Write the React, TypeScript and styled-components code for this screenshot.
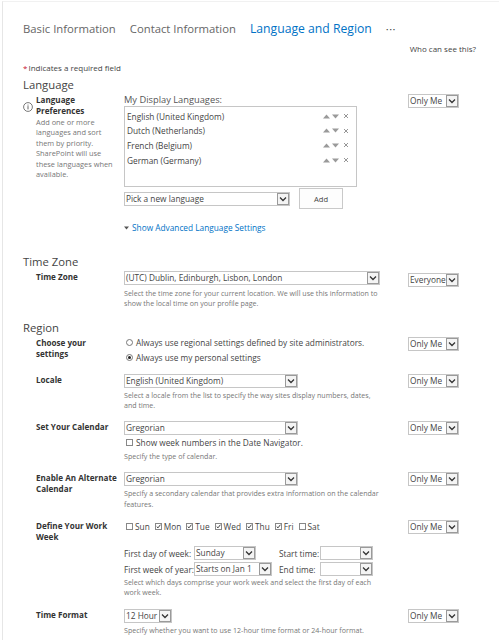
import React from "react";
import styled, { createGlobalStyle } from "styled-components";

const GlobalStyle = createGlobalStyle`
  html, body {
    margin: 0;
    padding: 0;
    background: #ffffff;
  }
  body {
    font-family: "Open Sans", "Noto Sans", sans-serif;
    color: #444444;
  }
`;

const Page = styled.div`
  margin: 1px 0 0 2px;
  border-left: 1px solid #e6e6e6;
  border-top: 1px solid #f1f1f1;
  padding: 19px 23px 0 20px;
  min-height: 640px;
  box-sizing: border-box;
`;

const Tabs = styled.nav`
  display: flex;
  align-items: center;
  gap: 14px;
  height: 16px;
`;

const Tab = styled.span<{ $active?: boolean }>`
  font-size: ${(p) => (p.$active ? "12.2px" : "11.3px")};
  line-height: 16px;
  color: ${(p) => (p.$active ? "#0072c6" : "#666666")};
  white-space: nowrap;
`;

const More = styled.span`
  font-size: 11px;
  color: #444;
  letter-spacing: 0.5px;
  margin-top: -2px;
`;

const WhoCan = styled.div`
  margin-top: 7px;
  text-align: right;
  font-size: 8px;
  line-height: 10px;
  color: #444;
`;

const Required = styled.div`
  margin-top: 9px;
  font-size: 8px;
  line-height: 10px;
  color: #444;

  b {
    color: #c8102e;
    font-weight: 400;
    margin-right: 1px;
  }
`;

const Heading = styled.h2`
  margin: 0 0 2px;
  font-size: 11.3px;
  line-height: 15px;
  font-weight: 400;
  color: #444;
`;

const FirstHeading = styled(Heading)`
  margin-top: 4px;
`;

const Row = styled.div`
  display: grid;
  grid-template-columns: 13px 88px 284px 51px;
  align-items: start;
  padding-bottom: 11px;
`;

const Gutter = styled.div`
  padding-top: 1px;
  color: #555;
`;

const Label = styled.div`
  max-width: 83px;
  font-size: 8.1px;
  line-height: 11px;
  font-weight: 700;
  color: #333;
`;

const LabelNote = styled.div`
  margin-top: 1px;
  max-width: 80px;
  font-size: 7.4px;
  line-height: 10.4px;
  font-weight: 400;
  color: #777;
`;

const Content = styled.div`
  display: flex;
  flex-direction: column;
  align-items: flex-start;
  font-size: 8.3px;
  line-height: 11px;
  color: #444;
`;

const Desc = styled.div<{ $top?: number }>`
  margin-top: ${(p) => p.$top ?? 2}px;
  max-width: 258px;
  font-size: 7.1px;
  line-height: 10.3px;
  color: #777;
`;

const Title = styled.div`
  font-size: 9.3px;
  line-height: 12px;
  color: #555;
`;

const ListBox = styled.div`
  width: 233px;
  height: 81px;
  box-sizing: border-box;
  border: 1px solid #c6c6c6;
  padding: 2px 0 0 2px;
`;

const ListItem = styled.div`
  display: flex;
  align-items: center;
  justify-content: space-between;
  height: 14.6px;
  padding-right: 7px;
  font-size: 8.3px;
  color: #444;
`;

const ItemTools = styled.span`
  display: flex;
  align-items: center;
  gap: 2px;
  color: #999;
`;

const PickRow = styled.div`
  display: flex;
  align-items: center;
  gap: 9px;
  margin-top: 1px;
`;

const AddButton = styled.button`
  width: 44px;
  height: 21px;
  border: 1px solid #c9c9c9;
  background: #fdfdfd;
  font-family: inherit;
  font-size: 7.6px;
  color: #444;
  padding: 0;
`;

const AdvancedLink = styled.a`
  display: flex;
  align-items: center;
  gap: 3px;
  margin: 13px 0 10px;
  font-size: 8.3px;
  line-height: 11px;
  color: #0072c6;
  text-decoration: none;
`;

const SelectBox = styled.div`
  display: flex;
  align-items: center;
  height: 14px;
  box-sizing: border-box;
  border: 1px solid #c6c6c6;
  background: #fff;
`;

const SelectText = styled.span`
  flex: 1;
  padding-left: 1px;
  font-size: 8.3px;
  line-height: 12px;
  color: #444;
  white-space: nowrap;
  overflow: hidden;
`;

const SelectArrow = styled.span`
  width: 12px;
  height: 12px;
  flex: none;
  box-sizing: border-box;
  border: 1px solid #9a9a9a;
  background: #f4f4f4;
  display: flex;
  align-items: center;
  justify-content: center;
`;

const Options = styled.div`
  display: flex;
  flex-direction: column;
  gap: 4px;
`;

const Choice = styled.label`
  display: flex;
  align-items: center;
  gap: 3px;
  height: 11px;
  padding-left: 2px;
  font-size: 8.3px;
  color: #444;
  white-space: nowrap;
`;

const RadioDot = styled.span<{ $on?: boolean }>`
  width: 7px;
  height: 7px;
  box-sizing: border-box;
  border-radius: 50%;
  border: 1px solid #777;
  display: flex;
  align-items: center;
  justify-content: center;

  &::after {
    content: "";
    width: 3px;
    height: 3px;
    border-radius: 50%;
    background: ${(p) => (p.$on ? "#222" : "transparent")};
  }
`;

const Box = styled.span`
  width: 7px;
  height: 7px;
  box-sizing: border-box;
  border: 1px solid #888;
  background: #fff;
  display: flex;
  align-items: center;
  justify-content: center;
`;

const CheckLine = styled(Choice)`
  margin-top: 2px;
`;

const Days = styled.div`
  display: flex;
  align-items: center;
  gap: 5px;
  height: 12px;
  padding-left: 2px;
`;

const Day = styled.label`
  display: flex;
  align-items: center;
  gap: 2px;
  font-size: 8.3px;
  color: #444;
`;

const WeekGrid = styled.div`
  display: grid;
  grid-template-columns: 70px 85px 41px 52px;
  grid-auto-rows: 16px;
  align-items: center;
  margin-top: 13px;
  font-size: 8.3px;
  color: #444;
  white-space: nowrap;
`;

const Privacy = styled.div<{ $drop?: number }>`
  padding-top: ${(p) => p.$drop ?? 0}px;
`;

const Chevron = () => (
  <svg width="8" height="6" viewBox="0 0 8 6">
    <polyline points="1,1.5 4,4.5 7,1.5" fill="none" stroke="#333" strokeWidth="1.3" />
  </svg>
);

const Tick = () => (
  <svg width="7" height="7" viewBox="0 0 7 7">
    <polyline points="1,3.6 2.8,5.4 6.2,1" fill="none" stroke="#222" strokeWidth="1.2" />
  </svg>
);

const Select: React.FC<{ value?: string; width: number }> = ({ value, width }) => (
  <SelectBox style={{ width }}>
    <SelectText>{value}</SelectText>
    <SelectArrow>
      <Chevron />
    </SelectArrow>
  </SelectBox>
);

const Check: React.FC<{ on?: boolean }> = ({ on }) => <Box>{on && <Tick />}</Box>;

const InfoIcon = () => (
  <svg width="10" height="10" viewBox="0 0 10 10">
    <circle cx="5" cy="5" r="4.4" fill="none" stroke="#555" strokeWidth="0.8" />
    <circle cx="5" cy="3" r="0.6" fill="#555" />
    <rect x="4.55" y="4.1" width="0.9" height="3.3" fill="#555" />
  </svg>
);

const Triangle: React.FC<{ down?: boolean }> = ({ down }) => (
  <svg width="7" height="5" viewBox="0 0 7 5">
    <polygon points={down ? "0,0.5 7,0.5 3.5,4.5" : "0,4.5 7,4.5 3.5,0.5"} fill="#9a9a9a" />
  </svg>
);

const Cross = () => (
  <svg width="6" height="6" viewBox="0 0 6 6" style={{ marginLeft: 2 }}>
    <path d="M1 1 L5 5 M5 1 L1 5" stroke="#8a8a8a" strokeWidth="0.9" />
  </svg>
);

const languages = [
  "English (United Kingdom)",
  "Dutch (Netherlands)",
  "French (Belgium)",
  "German (Germany)",
];

const days: [string, boolean][] = [
  ["Sun", false],
  ["Mon", true],
  ["Tue", true],
  ["Wed", true],
  ["Thu", true],
  ["Fri", true],
  ["Sat", false],
];

const App: React.FC = () => (
  <>
    <GlobalStyle />
    <Page>
      <Tabs>
        <Tab>Basic Information</Tab>
        <Tab>Contact Information</Tab>
        <Tab $active>Language and Region</Tab>
        <More>···</More>
      </Tabs>
      <WhoCan>Who can see this?</WhoCan>
      <Required>
        <b>*</b>Indicates a required field
      </Required>

      <FirstHeading>Language</FirstHeading>
      <Row>
        <Gutter>
          <InfoIcon />
        </Gutter>
        <Label>
          Language Preferences
          <LabelNote>
            Add one or more languages and sort them by priority. SharePoint will use these
            languages when available.
          </LabelNote>
        </Label>
        <Content>
          <Title>My Display Languages:</Title>
          <ListBox>
            {languages.map((lang) => (
              <ListItem key={lang}>
                {lang}
                <ItemTools>
                  <Triangle />
                  <Triangle down />
                  <Cross />
                </ItemTools>
              </ListItem>
            ))}
          </ListBox>
          <PickRow>
            <Select value="Pick a new language" width={166} />
            <AddButton type="button">Add</AddButton>
          </PickRow>
          <AdvancedLink href="#">
            <svg width="5" height="4" viewBox="0 0 5 4">
              <polygon points="0,0.5 5,0.5 2.5,3.5" fill="#555" />
            </svg>
            Show Advanced Language Settings
          </AdvancedLink>
        </Content>
        <Privacy>
          <Select value="Only Me" width={51} />
        </Privacy>
      </Row>

      <Heading>Time Zone</Heading>
      <Row>
        <Gutter />
        <Label>Time Zone</Label>
        <Content>
          <Select value="(UTC) Dublin, Edinburgh, Lisbon, London" width={256} />
          <Desc $top={3}>
            Select the time zone for your current location. We will use this information to show
            the local time on your profile page.
          </Desc>
        </Content>
        <Privacy $drop={2}>
          <Select value="Everyone" width={51} />
        </Privacy>
      </Row>

      <Heading>Region</Heading>
      <Row>
        <Gutter />
        <Label>Choose your settings</Label>
        <Content>
          <Options>
            <Choice>
              <RadioDot />
              Always use regional settings defined by site administrators.
            </Choice>
            <Choice>
              <RadioDot $on />
              Always use my personal settings
            </Choice>
          </Options>
        </Content>
        <Privacy>
          <Select value="Only Me" width={51} />
        </Privacy>
      </Row>

      <Row>
        <Gutter />
        <Label>Locale</Label>
        <Content>
          <Select value="English (United Kingdom)" width={174} />
          <Desc>
            Select a locale from the list to specify the way sites display numbers, dates, and
            time.
          </Desc>
        </Content>
        <Privacy>
          <Select value="Only Me" width={51} />
        </Privacy>
      </Row>

      <Row>
        <Gutter />
        <Label>Set Your Calendar</Label>
        <Content>
          <Select value="Gregorian" width={174} />
          <CheckLine>
            <Check />
            Show week numbers in the Date Navigator.
          </CheckLine>
          <Desc $top={3}>Specify the type of calendar.</Desc>
        </Content>
        <Privacy>
          <Select value="Only Me" width={51} />
        </Privacy>
      </Row>

      <Row>
        <Gutter />
        <Label>Enable An Alternate Calendar</Label>
        <Content>
          <Select value="Gregorian" width={174} />
          <Desc>
            Specify a secondary calendar that provides extra information on the calendar
            features.
          </Desc>
        </Content>
        <Privacy>
          <Select value="Only Me" width={51} />
        </Privacy>
      </Row>

      <Row>
        <Gutter />
        <Label>Define Your Work Week</Label>
        <Content>
          <Days>
            {days.map(([d, on]) => (
              <Day key={d}>
                <Check on={on} />
                {d}
              </Day>
            ))}
          </Days>
          <WeekGrid>
            <span>First day of week:</span>
            <Select value="Sunday" width={62} />
            <span>Start time:</span>
            <Select width={53} />
            <span>First week of year:</span>
            <Select value="Starts on Jan 1" width={78} />
            <span>End time:</span>
            <Select width={53} />
          </WeekGrid>
          <Desc $top={0}>
            Select which days comprise your work week and select the first day of each work week.
          </Desc>
        </Content>
        <Privacy>
          <Select value="Only Me" width={51} />
        </Privacy>
      </Row>

      <Row>
        <Gutter />
        <Label>Time Format</Label>
        <Content>
          <Select value="12 Hour" width={48} />
          <Desc>Specify whether you want to use 12-hour time format or 24-hour format.</Desc>
        </Content>
        <Privacy>
          <Select value="Only Me" width={51} />
        </Privacy>
      </Row>
    </Page>
  </>
);

export default App;
